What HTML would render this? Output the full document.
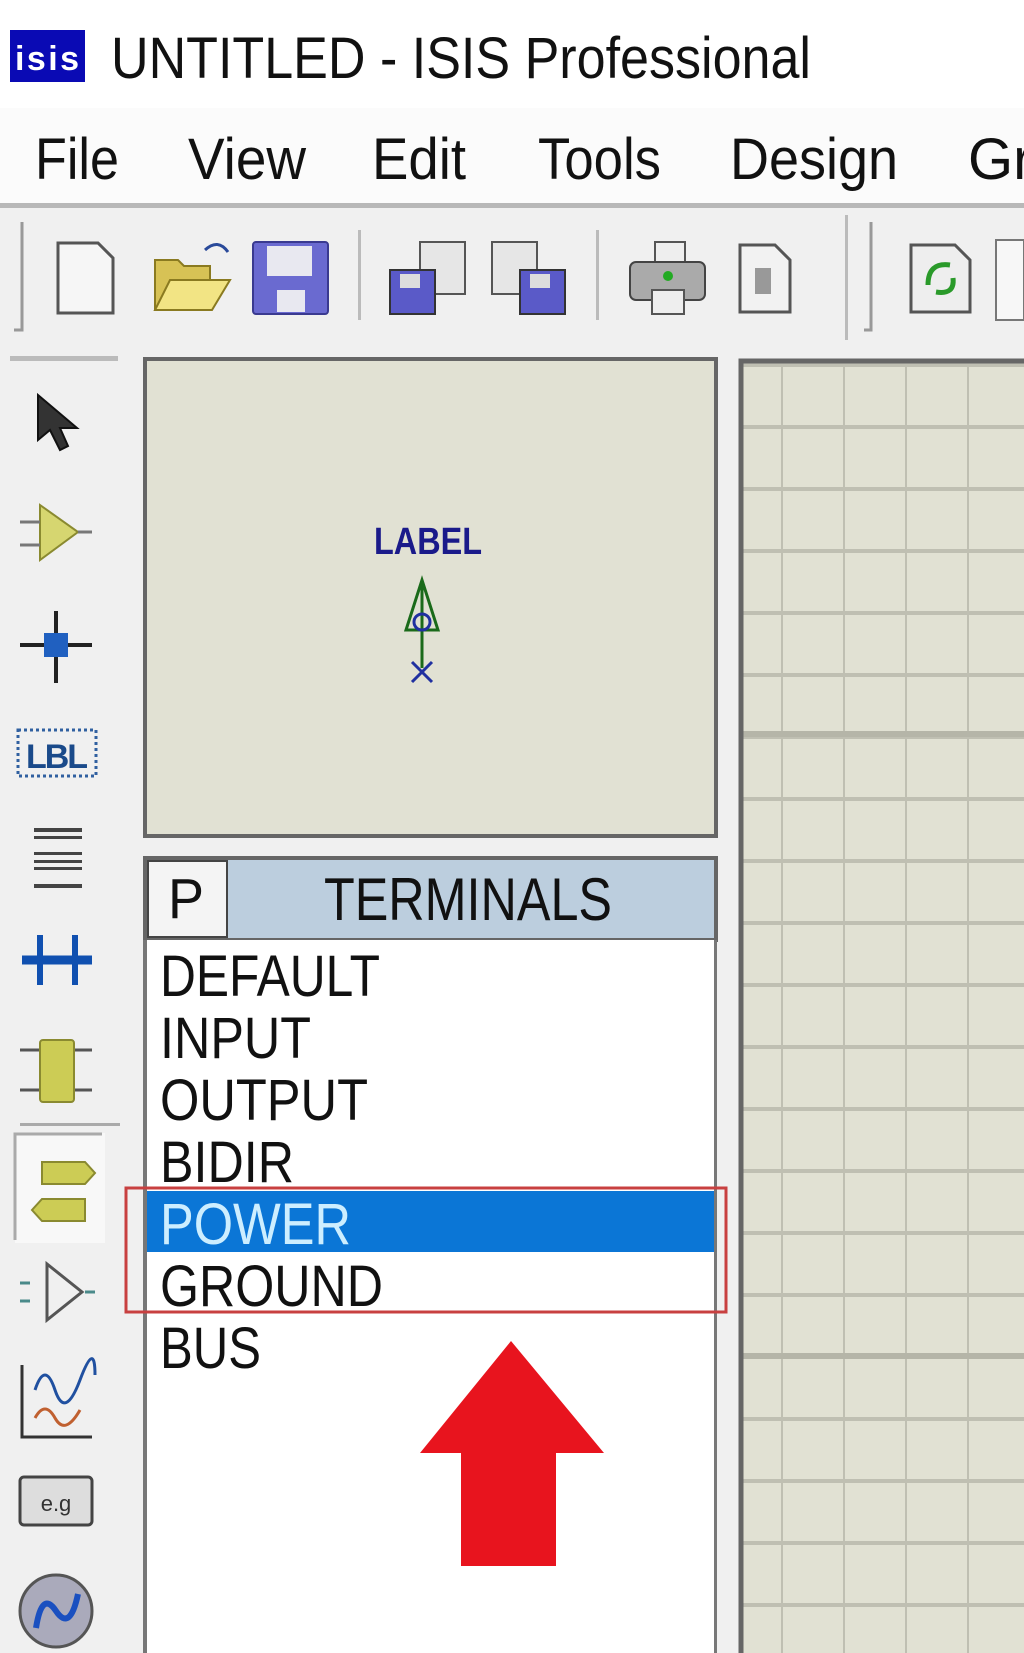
<!DOCTYPE html>
<html><head><meta charset="utf-8"><style>
html,body{margin:0;padding:0;background:#f0f0f0;}
svg{display:block}
text{font-family:"Liberation Sans",sans-serif}
</style></head><body>
<svg width="1024" height="1653" viewBox="0 0 1024 1653" xmlns="http://www.w3.org/2000/svg">
<defs>
<pattern id="grid" x="721" y="363" width="62" height="62" patternUnits="userSpaceOnUse">
<rect width="62" height="62" fill="#e1e1d3"/>
<rect x="0" y="0" width="62" height="4" fill="#bfbfb2"/>
<rect x="60" y="0" width="4" height="62" fill="#bfbfb2"/>
</pattern>
</defs>
<rect x="0" y="0" width="1024" height="108" fill="#ffffff"/>
<rect x="10" y="30" width="75" height="52" fill="#0a0ab4"/>
<text x="47" y="70" font-size="34" fill="#fff" text-anchor="middle" font-weight="bold" textLength="64">isis</text>
<text x="111" y="78" font-size="58" fill="#111" textLength="700" lengthAdjust="spacingAndGlyphs">UNTITLED - ISIS Professional</text>
<rect x="0" y="108" width="1024" height="96" fill="#fbfbfb"/>
<g font-size="58" fill="#111">
<text x="35" y="179" textLength="84" lengthAdjust="spacingAndGlyphs">File</text>
<text x="188" y="179" textLength="118" lengthAdjust="spacingAndGlyphs">View</text>
<text x="372" y="179" textLength="94" lengthAdjust="spacingAndGlyphs">Edit</text>
<text x="538" y="179" textLength="123" lengthAdjust="spacingAndGlyphs">Tools</text>
<text x="730" y="179" textLength="168" lengthAdjust="spacingAndGlyphs">Design</text>
<text x="968" y="179">Gr</text>
</g>
<rect x="0" y="203" width="1024" height="5" fill="#b8b8b8"/>
<rect x="0" y="208" width="1024" height="140" fill="#f0f0f0"/>
<path d="M22 222 V330 H14" stroke="#999" stroke-width="3" fill="none"/>
<path d="M871 222 V330 H864" stroke="#999" stroke-width="3" fill="none"/>
<rect x="358" y="230" width="3" height="90" fill="#bbb"/>
<rect x="596" y="230" width="3" height="90" fill="#bbb"/>
<rect x="845" y="215" width="3" height="125" fill="#bbb"/>
<path d="M58 243 H98 L113 258 V313 H58 Z" fill="#f6f6f6" stroke="#555" stroke-width="3"/>
<path d="M155 260 H178 L184 266 H210 V310 H155 Z" fill="#d7c255" stroke="#8a7a20" stroke-width="2"/>
<path d="M155 310 L170 280 H230 L212 310 Z" fill="#f2e484" stroke="#8a7a20" stroke-width="2"/>
<path d="M205 250 Q218 238 228 252" stroke="#2a4a9a" stroke-width="3" fill="none"/>
<rect x="253" y="242" width="75" height="72" rx="3" fill="#6a6ad0" stroke="#3a3a90" stroke-width="2"/>
<rect x="267" y="246" width="45" height="30" fill="#e8e8f0"/>
<rect x="277" y="290" width="28" height="22" fill="#e8e8f0"/>
<rect x="420" y="242" width="45" height="52" fill="#e6e6e6" stroke="#555" stroke-width="2"/>
<rect x="390" y="270" width="45" height="44" fill="#5a5ac8" stroke="#333" stroke-width="2"/>
<rect x="400" y="274" width="20" height="14" fill="#ddd"/>
<rect x="492" y="242" width="45" height="52" fill="#e6e6e6" stroke="#555" stroke-width="2"/>
<rect x="520" y="270" width="45" height="44" fill="#5a5ac8" stroke="#333" stroke-width="2"/>
<rect x="530" y="274" width="20" height="14" fill="#ddd"/>
<rect x="655" y="242" width="30" height="25" fill="#eee" stroke="#555" stroke-width="2"/>
<rect x="630" y="262" width="75" height="38" rx="6" fill="#aaa" stroke="#444" stroke-width="2"/>
<rect x="652" y="290" width="32" height="24" fill="#eee" stroke="#555" stroke-width="2"/>
<circle cx="668" cy="276" r="5" fill="#2a2"/>
<path d="M740 245 H775 L790 260 V312 H740 Z" fill="#f2f2f2" stroke="#555" stroke-width="3"/>
<rect x="755" y="268" width="16" height="26" fill="#999"/>
<path d="M911 245 H955 L970 260 V312 H911 Z" fill="#eee" stroke="#555" stroke-width="3"/>
<path d="M928 285 Q928 262 950 265 M936 292 Q955 295 953 278" stroke="#2a9a2a" stroke-width="5" fill="none"/>
<rect x="996" y="240" width="28" height="80" fill="#f7f7f7" stroke="#777" stroke-width="2"/>
<!-- left toolbar -->
<rect x="10" y="356" width="108" height="5" fill="#bbb"/>
<path d="M38 395 L38 440 L50 430 L60 450 L68 446 L60 428 L77 428 Z" fill="#333" stroke="#111" stroke-width="2"/>
<path d="M40 505 V560 L78 532 Z" fill="#d6d670" stroke="#8a8a30" stroke-width="2"/>
<path d="M20 522 H40 M20 545 H40 M78 532 H92" stroke="#777" stroke-width="3"/>
<path d="M56 611 V683 M20 645 H92" stroke="#222" stroke-width="4"/>
<rect x="44" y="633" width="24" height="24" fill="#2060c0"/>
<rect x="18" y="730" width="78" height="46" fill="none" stroke="#3060a0" stroke-width="3" stroke-dasharray="3 3"/>
<text x="57" y="768" font-size="34" fill="#1a4a8a" text-anchor="middle" font-weight="bold" textLength="62">LBL</text>
<g fill="#444">
<rect x="34" y="828" width="48" height="4"/><rect x="34" y="836" width="48" height="3"/>
<rect x="34" y="852" width="48" height="3"/><rect x="34" y="860" width="48" height="3"/><rect x="34" y="867" width="48" height="3"/>
<rect x="34" y="884" width="48" height="4"/>
</g>
<path d="M22 960 H92" stroke="#1050b0" stroke-width="9"/>
<path d="M40 935 V985 M75 935 V985" stroke="#1050b0" stroke-width="6"/>
<path d="M20 1050 H92 M20 1090 H92" stroke="#555" stroke-width="3"/>
<rect x="40" y="1040" width="34" height="62" rx="3" fill="#cccc55" stroke="#8a8a30" stroke-width="2"/>
<rect x="20" y="1123" width="100" height="3" fill="#aaa"/>
<rect x="15" y="1133" width="90" height="110" fill="#f8f8f8"/>
<path d="M15 1240 V1134 H102" stroke="#aaa" stroke-width="3" fill="none"/>
<path d="M42 1162 H85 L95 1173 L85 1184 H42 Z" fill="#cccc55" stroke="#8a8a30" stroke-width="2"/>
<path d="M85 1199 H42 L32 1210 L42 1221 H85 Z" fill="#cccc55" stroke="#8a8a30" stroke-width="2"/>
<path d="M47 1264 V1320 L82 1292 Z" fill="none" stroke="#555" stroke-width="3"/>
<path d="M20 1283 H30 M20 1301 H30 M85 1292 H95" stroke="#4a8a8a" stroke-width="3"/>
<path d="M22 1365 V1437 H92" stroke="#333" stroke-width="3" fill="none"/>
<path d="M35 1390 Q45 1360 55 1390 T80 1380 T95 1375" stroke="#2050a0" stroke-width="3" fill="none"/>
<path d="M35 1418 Q45 1400 55 1418 T80 1410" stroke="#c06030" stroke-width="3" fill="none"/>
<rect x="20" y="1477" width="72" height="48" rx="4" fill="#ddd" stroke="#444" stroke-width="3"/>
<text x="56" y="1511" font-size="22" fill="#333" text-anchor="middle">e.g</text>
<circle cx="56" cy="1611" r="36" fill="#aab" stroke="#555" stroke-width="3"/>
<path d="M36 1628 Q42 1590 56 1611 T78 1594" stroke="#1a50c0" stroke-width="6" fill="none"/>
<!-- preview -->
<rect x="145" y="359" width="571" height="477" fill="#e1e1d3" stroke="#666" stroke-width="4"/>
<text x="374" y="554" font-size="38" font-weight="bold" fill="#1a1a8a" textLength="108" lengthAdjust="spacingAndGlyphs">LABEL</text>
<path d="M422 580 V668 M406 630 L422 580 L438 630 Z" stroke="#1a6a1a" stroke-width="3" fill="none"/>
<circle cx="422" cy="622" r="8" fill="none" stroke="#2030a0" stroke-width="3"/>
<path d="M412 662 L432 682 M432 662 L412 682" stroke="#2030a0" stroke-width="3"/>
<!-- canvas -->
<rect x="739" y="359" width="285" height="1294" fill="url(#grid)"/>
<rect x="739" y="731" width="285" height="6" fill="#b5b5a8"/>
<rect x="739" y="1353" width="285" height="6" fill="#b5b5a8"/>
<path d="M741 1653 V361 H1024" stroke="#666" stroke-width="5" fill="none"/>
<!-- terminals header -->
<rect x="145" y="858" width="571" height="82" fill="#bccede" stroke="#666" stroke-width="4"/>
<rect x="148" y="861" width="79" height="76" fill="#f4f4f4" stroke="#444" stroke-width="2"/>
<text x="168" y="918" font-size="57" fill="#111" textLength="36" lengthAdjust="spacingAndGlyphs">P</text>
<text x="324" y="920" font-size="60" fill="#111" textLength="288" lengthAdjust="spacingAndGlyphs">TERMINALS</text>
<!-- list -->
<rect x="145" y="940" width="571" height="713" fill="#fff"/>
<rect x="143" y="940" width="4" height="713" fill="#777"/>
<rect x="714" y="940" width="3" height="713" fill="#777"/>
<rect x="147" y="1191" width="567" height="61" fill="#0b76d6"/>
<g font-size="58" fill="#111">
<text x="160" y="996" textLength="220" lengthAdjust="spacingAndGlyphs">DEFAULT</text>
<text x="160" y="1058" textLength="151" lengthAdjust="spacingAndGlyphs">INPUT</text>
<text x="160" y="1120" textLength="208" lengthAdjust="spacingAndGlyphs">OUTPUT</text>
<text x="160" y="1182" textLength="134" lengthAdjust="spacingAndGlyphs">BIDIR</text>
<text x="160" y="1244" textLength="191" lengthAdjust="spacingAndGlyphs" fill="#cdeeff">POWER</text>
<text x="160" y="1306" textLength="223" lengthAdjust="spacingAndGlyphs">GROUND</text>
<text x="160" y="1368" textLength="101" lengthAdjust="spacingAndGlyphs">BUS</text>
</g>
<rect x="126" y="1188" width="600" height="124" fill="none" stroke="#c84040" stroke-width="3"/>
<path d="M511 1341 L604 1453 H556 V1566 H461 V1453 H420 Z" fill="#e8141e"/>
</svg>
</body></html>
